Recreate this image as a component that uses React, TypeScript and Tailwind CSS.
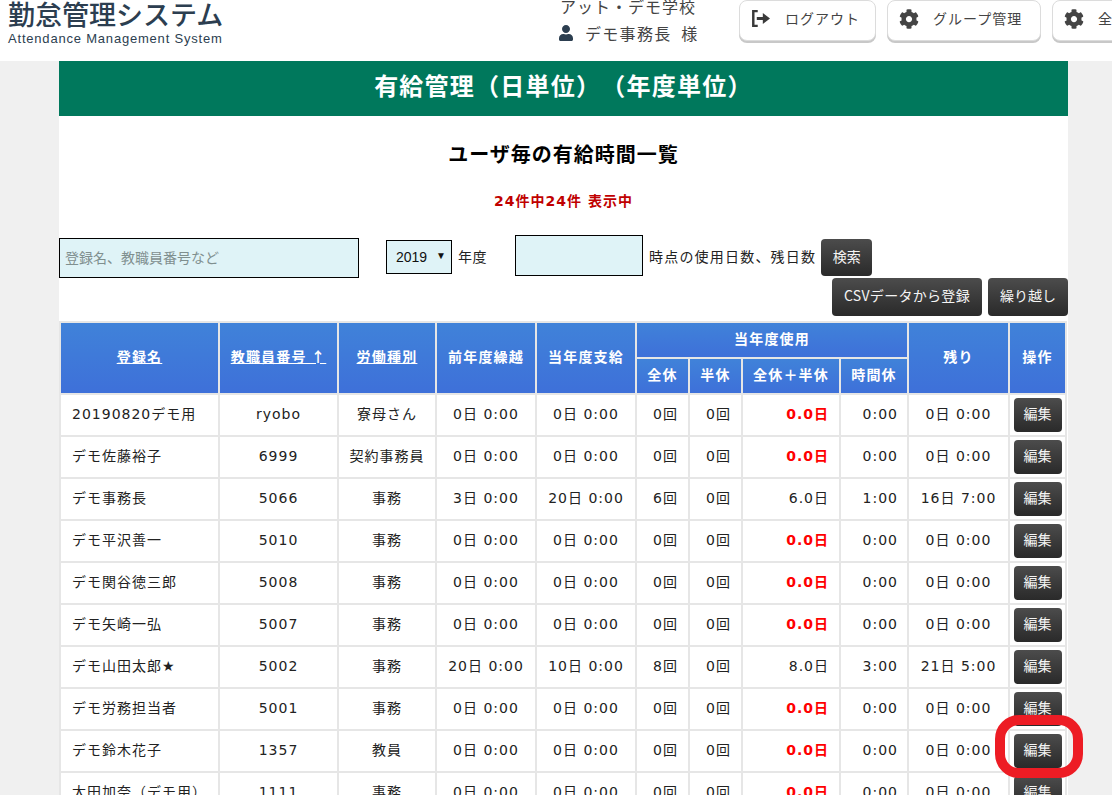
import { FaCog, FaUser } from 'react-icons/fa';

const rows = [
    { name: '20190820デモ用', no: 'ryobo', kind: '寮母さん', prev: '0日 0:00', cur: '0日 0:00', full: '0回', half: '0回', total: '0.0日', time: '0:00', rest: '0日 0:00' },
    { name: 'デモ佐藤裕子', no: '6999', kind: '契約事務員', prev: '0日 0:00', cur: '0日 0:00', full: '0回', half: '0回', total: '0.0日', time: '0:00', rest: '0日 0:00' },
    { name: 'デモ事務長', no: '5066', kind: '事務', prev: '3日 0:00', cur: '20日 0:00', full: '6回', half: '0回', total: '6.0日', time: '1:00', rest: '16日 7:00' },
    { name: 'デモ平沢善一', no: '5010', kind: '事務', prev: '0日 0:00', cur: '0日 0:00', full: '0回', half: '0回', total: '0.0日', time: '0:00', rest: '0日 0:00' },
    { name: 'デモ関谷徳三郎', no: '5008', kind: '事務', prev: '0日 0:00', cur: '0日 0:00', full: '0回', half: '0回', total: '0.0日', time: '0:00', rest: '0日 0:00' },
    { name: 'デモ矢崎一弘', no: '5007', kind: '事務', prev: '0日 0:00', cur: '0日 0:00', full: '0回', half: '0回', total: '0.0日', time: '0:00', rest: '0日 0:00' },
    { name: 'デモ山田太郎★', no: '5002', kind: '事務', prev: '20日 0:00', cur: '10日 0:00', full: '8回', half: '0回', total: '8.0日', time: '3:00', rest: '21日 5:00' },
    { name: 'デモ労務担当者', no: '5001', kind: '事務', prev: '0日 0:00', cur: '0日 0:00', full: '0回', half: '0回', total: '0.0日', time: '0:00', rest: '0日 0:00' },
    { name: 'デモ鈴木花子', no: '1357', kind: '教員', prev: '0日 0:00', cur: '0日 0:00', full: '0回', half: '0回', total: '0.0日', time: '0:00', rest: '0日 0:00' },
    { name: '太田加奈（デモ用）', no: '1111', kind: '事務', prev: '0日 0:00', cur: '0日 0:00', full: '0回', half: '0回', total: '0.0日', time: '0:00', rest: '0日 0:00' },
];

const colWidths = ['w-[157px]', 'w-[117px]', 'w-[96px]', 'w-[98px]', 'w-[98px]', 'w-[51px]', 'w-[51px]', 'w-[96px]', 'w-[66px]', 'w-[99px]', 'w-[55px]'];

const th = 'bg-linear-to-b from-[#4082d9] to-[#3e70d9] p-0 pb-[4px] text-center align-middle text-[14px] font-bold tracking-[1.2px] text-white';
const td = 'bg-white p-0 pb-[2px] whitespace-nowrap';
const darkBtn = 'flex items-center justify-center rounded-[4px] bg-linear-to-b from-[#4c4c4c] to-[#2a2a2a] text-[14px] text-[#f4f4f4]';
const fieldBg = 'border border-black bg-[#dff3f7]';

function LogoutIcon() {
    return (
        <svg viewBox="0 0 20 18" className="ml-[1px] h-[17px] w-[19px]" fill="#3a3a3a" aria-hidden="true">
            <path d="M0 0h6v2.4H2.6v13.2H6V18H0z" />
            <path d="M5 7.4h6.4V3.2L19 9l-7.6 5.8v-4.2H5z" />
        </svg>
    );
}

function HeaderButton({ icon, label, className }: { icon: React.ReactNode; label: string; className: string }) {
    return (
        <button
            type="button"
            className={`flex h-[41px] shrink-0 items-center rounded-[8px] border border-[#dcdcdc] bg-white pb-[4px] pl-[11px] text-[14px] tracking-[1px] text-[#444] shadow-[0_2px_0_#c8c8c8] ${className}`}
        >
            {icon}
            <span className="ml-[14px] whitespace-nowrap">{label}</span>
        </button>
    );
}

export default function App() {
    return (
        <div className="relative h-[795px] w-[1112px] overflow-hidden bg-[#f0f0f0] font-['Noto_Sans_CJK_JP','DejaVu_Sans',sans-serif] text-[#111] [text-spacing-trim:space-all]">
            <header className="flex h-[61px] bg-white">
                <div className="ml-[8px] w-[552px] shrink-0 text-[#2c3e50]">
                    <div className="h-[31px] text-[27px] leading-[27px] font-medium whitespace-nowrap">勤怠管理システム</div>
                    <div className="font-['Liberation_Sans',sans-serif] text-[13px] leading-[15px] tracking-[0.8px]">Attendance Management System</div>
                </div>
                <div className="w-[179px] shrink-0 text-[16px] tracking-[1px] text-[#444]">
                    <div className="-mt-[6px] h-[27px] leading-[24px] whitespace-nowrap">アット・デモ学校</div>
                    <div className="flex items-center leading-[24px] whitespace-nowrap">
                        <FaUser className="mr-[11px] -ml-[2px] text-[16px] text-[#2c3e50]" />
                        <span className="tracking-[1.3px]">デモ事務長&nbsp;&nbsp;様</span>
                    </div>
                </div>
                <div className="flex items-start gap-[11px]">
                    <HeaderButton icon={<LogoutIcon />} label="ログアウト" className="w-[137px]" />
                    <HeaderButton icon={<FaCog className="text-[20px] text-[#444]" />} label="グループ管理" className="w-[154px]" />
                    <HeaderButton icon={<FaCog className="text-[20px] text-[#444]" />} label="全体管理" className="w-[130px]" />
                </div>
            </header>

            <main className="ml-[59px] w-[1009px] bg-white pb-[40px]">
                <h1 className="flex h-[55px] items-center justify-center bg-[#00785c] pb-[7px] text-[24px] font-bold tracking-[1.25px] text-white">
                    有給管理（日単位）（年度単位）
                </h1>
                <h2 className="mt-[26px] text-center text-[20px] leading-[24px] font-bold tracking-[1px] text-black">ユーザ毎の有給時間一覧</h2>
                <p className="mt-[25px] h-[18px] text-center font-['DejaVu_Sans','Noto_Sans_CJK_JP',sans-serif] text-[14px] leading-[20px] font-bold tracking-[1px] text-[#c00000]">24件中24件 表示中</p>

                <div className="mt-[24px] flex h-[43px] items-center">
                    <input
                        placeholder="登録名、教職員番号など"
                        className={`mt-[6px] h-[40px] w-[300px] px-[5px] pb-[2px] text-[14px] placeholder:text-[#7f8f8f] ${fieldBg}`}
                    />
                    <div className={`relative mt-[4px] ml-[27px] flex h-[34px] w-[66px] items-center pt-[2px] pl-[9px] font-['Liberation_Sans',sans-serif] text-[14px] ${fieldBg}`}>
                        2019
                        <span className="absolute top-[9px] right-[5px] text-[10px] leading-[12px]">▼</span>
                    </div>
                    <span className="mt-[3px] ml-[6px] text-[14px] tracking-[0.5px] text-[#222]">年度</span>
                    <input className={`mt-[2px] ml-[28px] h-[41px] w-[128px] ${fieldBg}`} />
                    <span className="mt-[3px] ml-[6px] text-[14px] tracking-[1.2px] text-[#222]">時点の使用日数、残日数</span>
                    <button type="button" className={`mt-[6px] ml-[5px] h-[37px] w-[51px] pb-[2px] ${darkBtn}`}>検索</button>
                </div>
                <div className="mt-[2px] flex justify-end gap-[6px]">
                    <button type="button" className={`h-[38px] w-[150px] pb-[4px] tracking-[0.3px] ${darkBtn}`}>CSVデータから登録</button>
                    <button type="button" className={`h-[38px] w-[80px] pb-[4px] ${darkBtn}`}>繰り越し</button>
                </div>

                <table className="mt-[5px] w-[1008px] table-fixed border-separate border-spacing-[2px] bg-[#e6e6e6]">
                    <colgroup>
                        {colWidths.map((w, i) => <col key={i} className={w} />)}
                    </colgroup>
                    <thead>
                        <tr className="h-[34px]">
                            <th rowSpan={2} className={th}><a className="underline">登録名</a></th>
                            <th rowSpan={2} className={th}><a className="underline">教職員番号 ↑</a></th>
                            <th rowSpan={2} className={th}><a className="underline">労働種別</a></th>
                            <th rowSpan={2} className={th}>前年度繰越</th>
                            <th rowSpan={2} className={th}>当年度支給</th>
                            <th colSpan={4} className={th}>当年度使用</th>
                            <th rowSpan={2} className={th}>残り</th>
                            <th rowSpan={2} className={th}>操作</th>
                        </tr>
                        <tr className="h-[34px]">
                            <th className={th}>全休</th>
                            <th className={th}>半休</th>
                            <th className={th}>全休＋半休</th>
                            <th className={th}>時間休</th>
                        </tr>
                    </thead>
                    <tbody className="font-['DejaVu_Sans','Noto_Sans_CJK_JP',sans-serif] text-[14px] tracking-[1px] text-[#222]">
                        {rows.map((row) => (
                            <tr key={row.no} className="h-[40px] bg-white">
                                <td className={`${td} pl-[11px]`}>{row.name}</td>
                                <td className={`${td} text-center`}>{row.no}</td>
                                <td className={`${td} text-center`}>{row.kind}</td>
                                <td className={`${td} text-center`}>{row.prev}</td>
                                <td className={`${td} text-center`}>{row.cur}</td>
                                <td className={`${td} pr-[10px] text-right`}>{row.full}</td>
                                <td className={`${td} pr-[10px] text-right`}>{row.half}</td>
                                <td className={`${td} pr-[10px] text-right ${row.total === '0.0日' ? 'font-bold text-[#ff0000]' : ''}`}>{row.total}</td>
                                <td className={`${td} pr-[9px] text-right`}>{row.time}</td>
                                <td className={`${td} text-center`}>{row.rest}</td>
                                <td className="bg-white p-0">
                                    <button type="button" className={`mx-auto h-[34px] w-[48px] pb-[4px] font-['Noto_Sans_CJK_JP',sans-serif] tracking-normal ${darkBtn}`}>編集</button>
                                </td>
                            </tr>
                        ))}
                    </tbody>
                </table>
            </main>

            {/* 注釈の赤枠 */}
            <div className="absolute top-[715px] left-[995px] h-[63px] w-[88px] rounded-[24px] border-[10px] border-[#ed1c24]" />
        </div>
    );
}
